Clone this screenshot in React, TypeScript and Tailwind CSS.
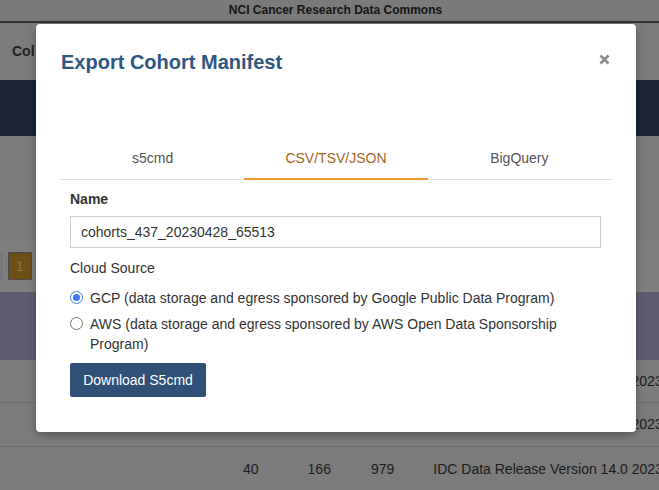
import React from "react";

export default function App() {
  return (
    <div className="relative w-[659px] h-[490px] overflow-hidden bg-[#7b7b7b] font-['Liberation_Sans',Arial,sans-serif]">
      {/* background page (dimmed) */}
      <div className="flex flex-col">
        <div className="h-[21px] bg-[#7a7a7a] text-center text-[12px] font-bold leading-[21px] text-[#151515] pl-[12px]">
          NCI Cancer Research Data Commons
        </div>
        <div className="h-[2px] bg-[#353535]" />
        <div className="h-[57px] bg-[#7b7b7b] flex items-center pl-[12px] text-[14px] font-bold text-[#222]">
          Col
        </div>
        <div className="h-[56px] bg-[#1b2536]" />
        <div className="h-[104px] bg-[#7b7b7b]" />
        <div className="h-[52px] bg-[#7e7e7e] flex items-center gap-[6px]">
          <div className="w-[2px] h-[27px] border-y border-r border-[#6f6f6f] bg-[#7e7e7e]" />
          <div className="w-[24px] h-[28px] bg-[#6e4f16] border border-[#4a4a4a] rounded-[1px] flex items-center justify-center text-[14px] text-[#8a7450]">
            1
          </div>
        </div>
        <div className="h-[68px] bg-[#5f5a6d]" />
        <div className="border-b border-[#6c6c6c] h-[43px] flex items-center pl-[433px] text-[14px] text-[#1c1c1c] whitespace-nowrap">
          IDC Data Release Version 14.0 2023
        </div>
        <div className="border-b border-[#6c6c6c] h-[44px] flex items-center pl-[433px] text-[14px] text-[#1c1c1c] whitespace-nowrap">
          IDC Data Release Version 14.0 2023
        </div>
        <div className="h-[43px] flex items-center text-[14px] text-[#1c1c1c] whitespace-nowrap pt-[2px]">
          <span className="ml-[243px]">40</span>
          <span className="ml-[49px]">166</span>
          <span className="ml-[40px]">979</span>
          <span className="ml-[39px]">IDC Data Release Version 14.0 2023</span>
        </div>
      </div>

      {/* modal */}
      <div className="absolute left-[36px] top-[24px] w-[600px] h-[408px] bg-white rounded-[4px] shadow-[0_3px_9px_rgba(0,0,0,0.3)] px-[25px]">
        <div className="flex justify-between items-start pt-[26px]">
          <h2 className="text-[20px] leading-[24px] font-bold text-[#2f5680]">Export Cohort Manifest</h2>
          <svg width="11" height="11" viewBox="0 0 11 11" className="mt-[4px] mr-[1px]">
            <path d="M1.5 1.5 L9.5 9.5 M9.5 1.5 L1.5 9.5" stroke="#8a8a8a" strokeWidth="2.6" strokeLinecap="butt" />
          </svg>
        </div>

        <div className="mt-[64px] flex border-b border-[#dddddd]">
          <div className="flex-1 text-center pt-[10px] pb-[10px] leading-[20px] text-[14px] text-[#555] border-b-2 border-transparent -mb-px">
            s5cmd
          </div>
          <div className="flex-1 text-center pt-[10px] pb-[10px] leading-[20px] text-[14px] text-[#a8661c] border-b-2 border-[#ee9a2c] -mb-px">
            CSV/TSV/JSON
          </div>
          <div className="flex-1 text-center pt-[10px] pb-[10px] leading-[20px] text-[14px] text-[#555] border-b-2 border-transparent -mb-px">
            BigQuery
          </div>
        </div>

        <div className="ml-[9px] w-[531px] text-[14px] text-[#333]">
          <div className="mt-[9px] leading-[20px] font-bold">Name</div>
          <div className="mt-[7px] h-[32px] border border-[#cccccc] flex items-center pl-[10px] text-[#333]">
            cohorts_437_20230428_65513
          </div>
          <div className="mt-[10px] leading-[20px]">Cloud Source</div>
          <div className="mt-[10px] flex items-start leading-[20px]">
            <span className="mt-[3px] w-[13px] h-[13px] rounded-full border border-[#3b78f0] bg-white flex items-center justify-center shrink-0">
              <span className="w-[7px] h-[7px] rounded-full bg-[#3b78f0]" />
            </span>
            <span className="ml-[7px]">GCP (data storage and egress sponsored by Google Public Data Program)</span>
          </div>
          <div className="mt-[6px] flex items-start leading-[20px]">
            <span className="mt-[3px] w-[13px] h-[13px] rounded-full border border-[#767676] bg-white shrink-0" />
            <span className="ml-[7px] w-[480px]">
              AWS (data storage and egress sponsored by AWS Open Data Sponsorship Program)
            </span>
          </div>
          <button className="mt-[9px] h-[34px] w-[136px] bg-[#2f5077] text-white text-[14px] rounded-[2px] flex items-center justify-center">
            Download S5cmd
          </button>
        </div>
      </div>
    </div>
  );
}
